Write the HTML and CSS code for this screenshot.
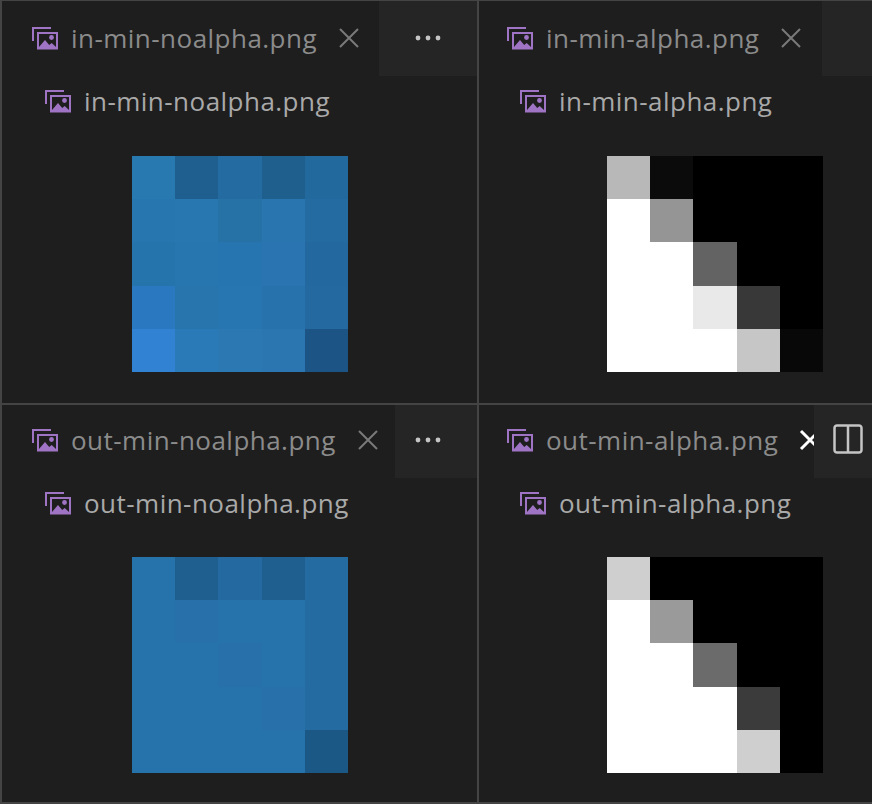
FILE: index.html
```html
<!DOCTYPE html>
<html lang="en">
<head>
<meta charset="utf-8">
<title>Image comparison</title>
<link rel="stylesheet" href="styles.css">
</head>
<body>
<svg class="defs" width="0" height="0" aria-hidden="true">
  <symbol id="img" viewBox="0 0 26 24">
    <path d="M1 15V2h18" fill="none" stroke="#a074c4" stroke-width="2"/>
    <path d="M5 6h21v17.500H5z" fill="#a074c4"/>
    <path d="M7 8h17v13l-4.300-4-2.500 2-4.200-5L7 21z" fill="#1e1e1e"/>
    <circle cx="19.500" cy="11.500" r="2.400" fill="#a074c4"/>
  </symbol>
</svg>
<main class="window">

  <section class="pane pane-left">
    <header class="tabbar">
      <div class="tab tab-a">
        <svg class="file-icon"><use href="#img"/></svg>
        <span class="tab-label">in-min-noalpha.png</span>
        <svg class="close" viewBox="0 0 22 22"><path d="M2 2l18 18M20 2L2 20"/></svg>
      </div>
      <div class="actions">
        <svg class="dots" viewBox="0 0 26 6"><circle cx="3" cy="3" r="2.400"/><circle cx="13" cy="3" r="2.400"/><circle cx="23" cy="3" r="2.400"/></svg>
      </div>
    </header>
    <div class="crumb"><svg class="file-icon"><use href="#img"/></svg><span>in-min-noalpha.png</span></div>
    <div class="stage">
      <div class="pixels">
        <i style="background:#2979b1"></i><i style="background:#1f5f8f"></i><i style="background:#236ba1"></i><i style="background:#1f5f8e"></i><i style="background:#22699e"></i>
        <i style="background:#2876b0"></i><i style="background:#2877b1"></i><i style="background:#2672a6"></i><i style="background:#2875b0"></i><i style="background:#246ba1"></i>
        <i style="background:#2674ac"></i><i style="background:#2876b0"></i><i style="background:#2775b0"></i><i style="background:#2a75b1"></i><i style="background:#2369a0"></i>
        <i style="background:#2a78c0"></i><i style="background:#2875ad"></i><i style="background:#2876b1"></i><i style="background:#2772ad"></i><i style="background:#2469a0"></i>
        <i style="background:#3282d4"></i><i style="background:#2a7ab8"></i><i style="background:#2b78b2"></i><i style="background:#2b76b1"></i><i style="background:#1c5485"></i>
      </div>
    </div>
  </section>

  <section class="pane">
    <header class="tabbar">
      <div class="tab tab-b">
        <svg class="file-icon"><use href="#img"/></svg>
        <span class="tab-label">in-min-alpha.png</span>
        <svg class="close" viewBox="0 0 22 22"><path d="M2 2l18 18M20 2L2 20"/></svg>
      </div>
      <div class="actions"></div>
    </header>
    <div class="crumb"><svg class="file-icon"><use href="#img"/></svg><span>in-min-alpha.png</span></div>
    <div class="stage">
      <div class="pixels">
        <i style="background:#b8b8b8"></i><i style="background:#0b0b0b"></i><i style="background:#000"></i><i style="background:#000"></i><i style="background:#000"></i>
        <i style="background:#fff"></i><i style="background:#959595"></i><i style="background:#000"></i><i style="background:#000"></i><i style="background:#000"></i>
        <i style="background:#fff"></i><i style="background:#fff"></i><i style="background:#636363"></i><i style="background:#000"></i><i style="background:#000"></i>
        <i style="background:#fff"></i><i style="background:#fff"></i><i style="background:#e9e9e9"></i><i style="background:#383838"></i><i style="background:#000"></i>
        <i style="background:#fff"></i><i style="background:#fff"></i><i style="background:#fff"></i><i style="background:#c6c6c6"></i><i style="background:#080808"></i>
      </div>
    </div>
  </section>

  <section class="pane pane-left pane-lower">
    <header class="tabbar">
      <div class="tab tab-c">
        <svg class="file-icon"><use href="#img"/></svg>
        <span class="tab-label">out-min-noalpha.png</span>
        <svg class="close" viewBox="0 0 22 22"><path d="M2 2l18 18M20 2L2 20"/></svg>
      </div>
      <div class="actions">
        <svg class="dots" viewBox="0 0 26 6"><circle cx="3" cy="3" r="2.400"/><circle cx="13" cy="3" r="2.400"/><circle cx="23" cy="3" r="2.400"/></svg>
      </div>
    </header>
    <div class="crumb"><svg class="file-icon"><use href="#img"/></svg><span>out-min-noalpha.png</span></div>
    <div class="stage">
      <div class="pixels">
        <i style="background:#2672ab"></i><i style="background:#1f5f90"></i><i style="background:#24699f"></i><i style="background:#1f5f90"></i><i style="background:#246ba1"></i>
        <i style="background:#2672ab"></i><i style="background:#2770aa"></i><i style="background:#2672ab"></i><i style="background:#2672ab"></i><i style="background:#246ba1"></i>
        <i style="background:#2672ab"></i><i style="background:#2672ab"></i><i style="background:#2870aa"></i><i style="background:#2672ab"></i><i style="background:#246ba1"></i>
        <i style="background:#2672ab"></i><i style="background:#2672ab"></i><i style="background:#2672ab"></i><i style="background:#2870a9"></i><i style="background:#246ba1"></i>
        <i style="background:#2672ab"></i><i style="background:#2672ab"></i><i style="background:#2672ab"></i><i style="background:#2672ab"></i><i style="background:#1c5885"></i>
      </div>
    </div>
  </section>

  <section class="pane pane-lower">
    <header class="tabbar">
      <div class="tab tab-d">
        <svg class="file-icon"><use href="#img"/></svg>
        <span class="tab-label">out-min-alpha.png</span>
        <svg class="close close-hot" viewBox="0 0 22 22"><path d="M2 2l18 18M20 2L2 20"/></svg>
      </div>
      <div class="actions actions-split">
        <svg class="split" viewBox="0 0 30 30"><path d="M4 1.500h22a2.500 2.500 0 0 1 2.500 2.500v22a2.500 2.500 0 0 1-2.500 2.500H4A2.500 2.500 0 0 1 1.500 26V4A2.500 2.500 0 0 1 4 1.500zM15 1.500v27"/></svg>
      </div>
    </header>
    <div class="crumb"><svg class="file-icon"><use href="#img"/></svg><span>out-min-alpha.png</span></div>
    <div class="stage">
      <div class="pixels">
        <i style="background:#cfcfcf"></i><i style="background:#000"></i><i style="background:#000"></i><i style="background:#000"></i><i style="background:#000"></i>
        <i style="background:#fff"></i><i style="background:#9a9a9a"></i><i style="background:#000"></i><i style="background:#000"></i><i style="background:#000"></i>
        <i style="background:#fff"></i><i style="background:#fff"></i><i style="background:#6b6b6b"></i><i style="background:#000"></i><i style="background:#000"></i>
        <i style="background:#fff"></i><i style="background:#fff"></i><i style="background:#fff"></i><i style="background:#3b3b3b"></i><i style="background:#000"></i>
        <i style="background:#fff"></i><i style="background:#fff"></i><i style="background:#fff"></i><i style="background:#cfcfcf"></i><i style="background:#000"></i>
      </div>
    </div>
  </section>

</main>
</body>
</html>
```
FILE: styles.css
```css
* { box-sizing: border-box; }
html, body { margin: 0; height: 100%; background: #1e1e1e; overflow: hidden; }
.defs { position: absolute; }

.window {
  display: grid;
  grid-template-columns: 475px 472px;
  grid-template-rows: 402px 1fr;
  gap: 2px;
  width: 872px;
  height: 804px;
  padding: 1px 0 2px 2px;
  overflow: hidden;
  background: #444;
  font-family: "Open Sans", "Noto Sans", sans-serif;
  font-size: 26px;
  letter-spacing: 0.47px;
}

.pane {
  display: flex;
  flex-direction: column;
  min-width: 0;
  min-height: 0;
  background: #1e1e1e;
  overflow: hidden;
}

.tabbar {
  display: flex;
  flex: none;
  height: 75px;
  background: #252526;
}
.pane-lower .tabbar { height: 73px; }

.tab {
  display: flex;
  flex: none;
  align-items: center;
  padding-left: 28px;
  padding-bottom: 1px;
  background: #1e1e1e;
  overflow: hidden;
}
.pane-left .tab { padding-left: 30px; }
.pane-lower .tab { padding-bottom: 3px; }
.tab-a { width: 377px; }
.tab-b { width: 343px; }
.tab-c { width: 393px; }
.tab-d { width: 335px; }

.file-icon { flex: none; width: 26px; height: 24px; }

.tab-label {
  margin-left: 13px;
  color: #8b8b8b;
  white-space: nowrap;
}

.close {
  flex: none;
  width: 22px;
  height: 22px;
  margin-left: 21px;
  fill: none;
  stroke: #7a7a7a;
  stroke-width: 2;
}
.close-hot { stroke: #fff; stroke-width: 3; }

.actions {
  display: flex;
  flex: 1;
  align-items: center;
  justify-content: flex-end;
  padding-right: 36px;
  padding-bottom: 1px;
}
.pane-lower .actions { padding-bottom: 3px; }
.actions-split { justify-content: flex-start; padding-left: 19px; }
.dots { width: 26px; height: 6px; fill: #c5c5c5; }
.split {
  width: 30px;
  height: 30px;
  margin-bottom: 3px;
  fill: none;
  stroke: #c5c5c5;
  stroke-width: 2.500;
}

.crumb {
  display: flex;
  flex: none;
  align-items: center;
  gap: 13px;
  height: 50px;
  padding-left: 41px;
  color: #a9a9a9;
}
.pane-left .crumb { padding-left: 43px; }

.stage {
  display: flex;
  flex: 1;
  align-items: center;
  justify-content: center;
  padding-bottom: 1px;
}
.pane-lower .stage { padding-bottom: 0; }

.pixels {
  display: grid;
  grid-template-columns: 43px 43px 44px 43px 43px;
  grid-template-rows: 43px 43px 44px 43px 43px;
}
```
